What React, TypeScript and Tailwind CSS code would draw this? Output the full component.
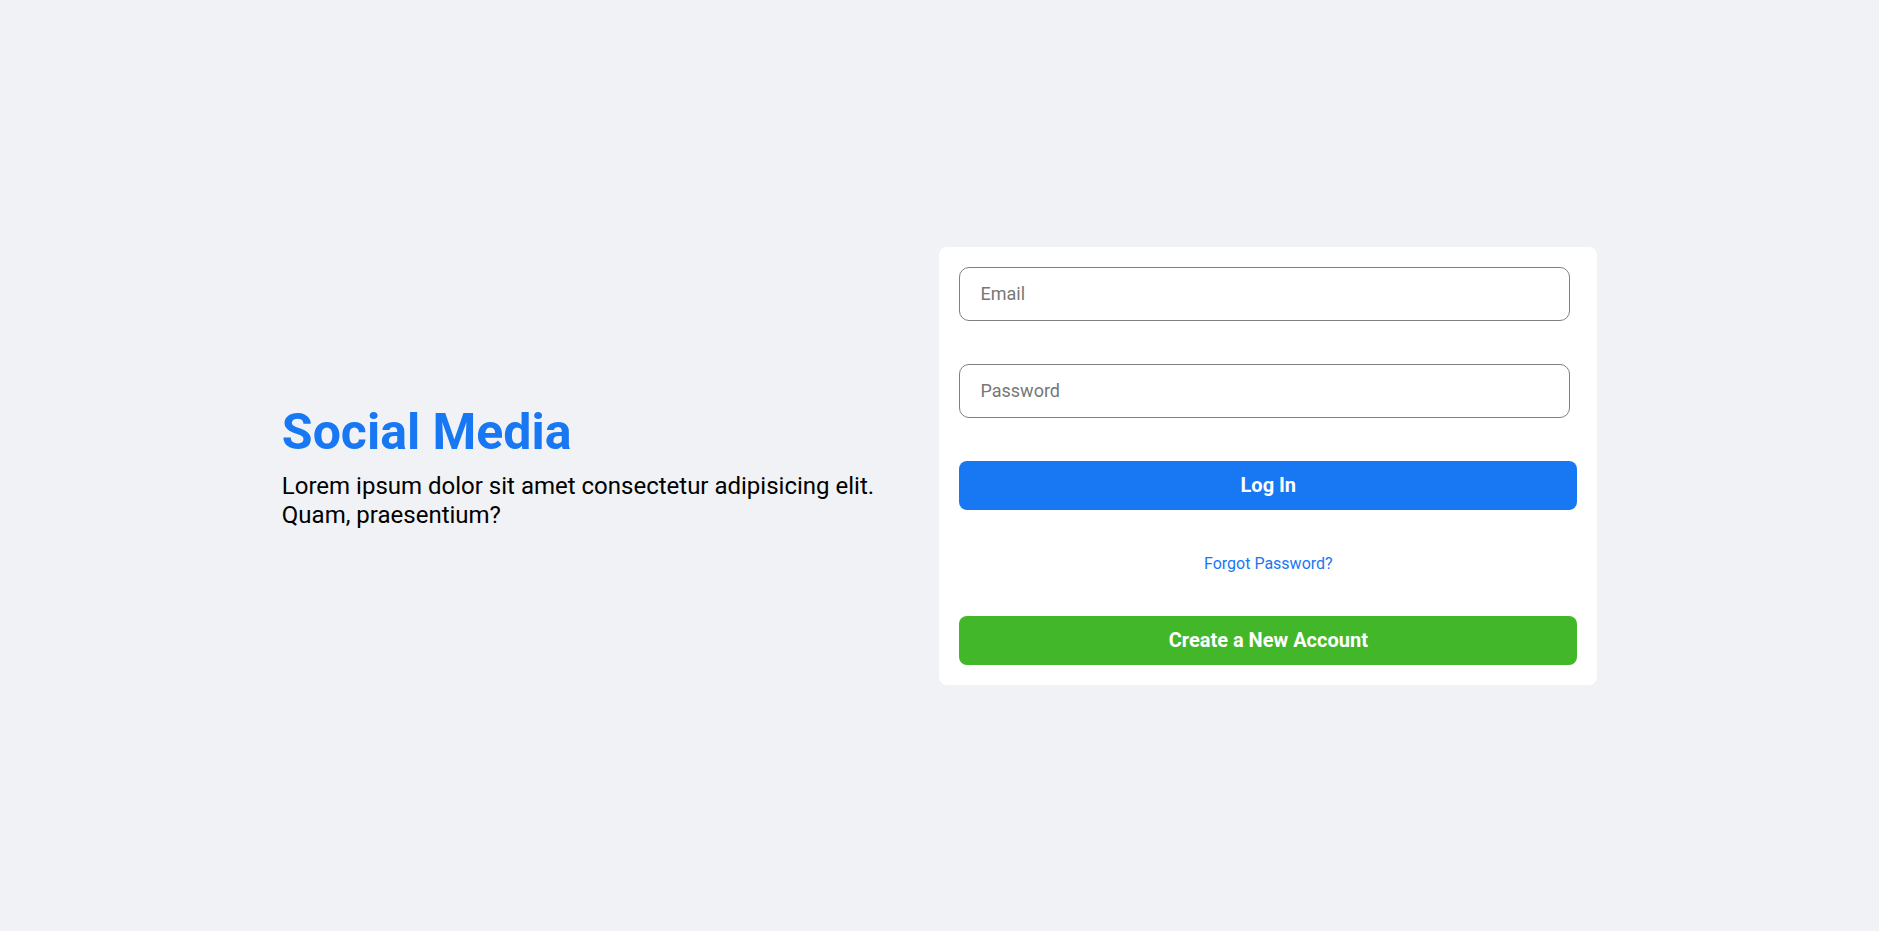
export default function App() {
  return (
    <div className="min-h-screen bg-[#f0f2f5] flex items-center justify-center font-['Roboto',sans-serif]">
      <div className="w-[70%] flex items-center">
        {/* Left: brand + tagline */}
        <div className="w-1/2">
          <h1 className="mb-[10px] text-[50px] font-bold leading-[1.2] text-[#1877f2]">
            Social Media
          </h1>
          <p className="text-2xl leading-[1.2] text-black">
            Lorem ipsum dolor sit amet consectetur adipisicing elit.
            <br />
            Quam, praesentium?
          </p>
        </div>

        {/* Right: login card */}
        <div className="w-1/2">
          <form className="bg-white rounded-lg p-5 flex flex-col">
            <input
              type="email"
              placeholder="Email"
              className="w-[611px] h-[54px] px-5 text-lg rounded-[10px] border border-[#808080] outline-none placeholder:text-[#777]"
            />
            <input
              type="password"
              placeholder="Password"
              className="mt-[43px] w-[611px] h-[54px] px-5 text-lg rounded-[10px] border border-[#808080] outline-none placeholder:text-[#777]"
            />
            <button
              type="button"
              className="mt-[43px] h-[49px] w-full rounded-lg bg-[#1877f2] text-white text-xl font-bold"
            >
              Log In
            </button>
            <a href="#" className="mt-[42px] text-center text-base text-[#1877f2]">
              Forgot Password?
            </a>
            <button
              type="button"
              className="mt-[40px] h-[49px] w-full rounded-lg bg-[#42b72a] text-white text-xl font-bold"
            >
              Create a New Account
            </button>
          </form>
        </div>
      </div>
    </div>
  );
}
